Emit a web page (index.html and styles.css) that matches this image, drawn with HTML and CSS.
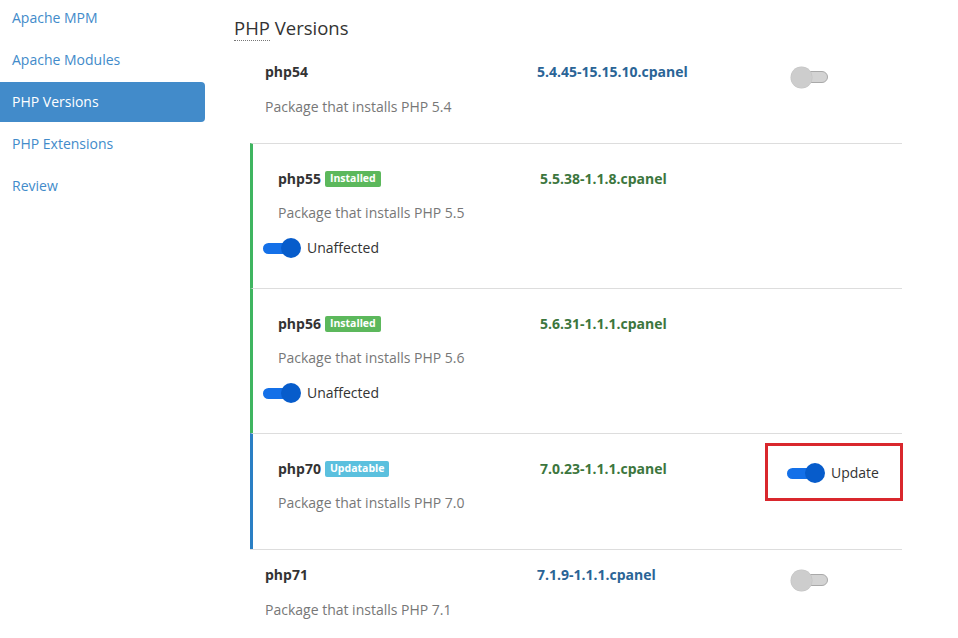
FILE: index.html
```html
<!DOCTYPE html>
<html>
<head>
<meta charset="utf-8">
<link rel="stylesheet" href="styles.css">
</head>
<body>
<div class="page">
  <nav class="sidebar">
    <a class="nav-item">Apache MPM</a>
    <a class="nav-item">Apache Modules</a>
    <a class="nav-item active">PHP Versions</a>
    <a class="nav-item">PHP Extensions</a>
    <a class="nav-item">Review</a>
  </nav>
  <main class="main">
    <h2 class="title"><abbr class="abbr" title="PHP: Hypertext Preprocessor">PHP</abbr> Versions</h2>
    <div class="list">
      <div class="pkg plain">
        <div class="name">php54</div>
        <div class="ver">5.4.45-15.15.10.cpanel</div>
        <div class="act"><span class="toggle off"><span class="track"></span><span class="knob"></span></span></div>
        <div class="desc">Package that installs PHP 5.4</div>
      </div>
      <div class="pkg marked installed">
        <div class="name">php55 <span class="badge green">Installed</span></div>
        <div class="ver">5.5.38-1.1.8.cpanel</div>
        <div class="desc">Package that installs PHP 5.5</div>
        <div class="state"><span class="toggle on"><span class="track"></span><span class="knob"></span></span><span class="state-label">Unaffected</span></div>
      </div>
      <div class="pkg marked installed">
        <div class="name">php56 <span class="badge green">Installed</span></div>
        <div class="ver">5.6.31-1.1.1.cpanel</div>
        <div class="desc">Package that installs PHP 5.6</div>
        <div class="state"><span class="toggle on"><span class="track"></span><span class="knob"></span></span><span class="state-label">Unaffected</span></div>
      </div>
      <div class="pkg marked updatable">
        <div class="name">php70 <span class="badge blue">Updatable</span></div>
        <div class="ver">7.0.23-1.1.1.cpanel</div>
        <div class="act highlight"><span class="toggle on"><span class="track"></span><span class="knob"></span></span><span class="state-label">Update</span></div>
        <div class="desc">Package that installs PHP 7.0</div>
      </div>
      <div class="pkg plain">
        <div class="name">php71</div>
        <div class="ver">7.1.9-1.1.1.cpanel</div>
        <div class="act"><span class="toggle off"><span class="track"></span><span class="knob"></span></span></div>
        <div class="desc">Package that installs PHP 7.1</div>
      </div>
    </div>
  </main>
</div>
</body>
</html>
```

FILE: styles.css
```css
html, body {
  margin: 0;
  padding: 0;
  background: #fff;
}
body {
  font-family: "Open Sans", "Liberation Sans", sans-serif;
  font-size: 14px;
  line-height: 20px;
  color: #333;
  overflow: hidden;
}
.page {
  display: flex;
  align-items: flex-start;
}
.sidebar {
  width: 205px;
  flex: none;
  display: flex;
  flex-direction: column;
  gap: 2px;
  margin-top: -2px;
}
.nav-item {
  display: block;
  padding: 10px 12px;
  color: #428bca;
  text-decoration: none;
  border-radius: 0 4px 4px 0;
}
.nav-item.active {
  background: #428bca;
  color: #fff;
}
.main {
  flex: none;
  padding-left: 29px;
}
.title {
  margin: 18px 0 0 0;
  font-size: 18.5px;
  line-height: 20px;
  font-weight: 400;
  color: #333;
}
.abbr {
  text-decoration: none;
  border-bottom: 1px dotted #777;
  cursor: help;
}
.list {
  margin-left: 16px;
  width: 652px;
  margin-top: 9px;
}
.pkg {
  display: grid;
  border-top: 1px solid #ddd;
}
.pkg:first-child {
  border-top: 0;
}
.pkg.plain {
  grid-template-columns: 272px 254px auto;
  padding: 15px 15px 26px 15px;
  row-gap: 15px;
}
.pkg.marked {
  grid-template-columns: 262px 225px auto;
  padding: 25px 0 30px 25px;
  row-gap: 14px;
  border-left: 3px solid #3fb560;
}
.pkg.marked.updatable {
  border-left-color: #2a7fc4;
  padding-bottom: 36px;
}
.name {
  grid-column: 1;
  grid-row: 1;
  font-weight: 700;
  color: #333;
  display: flex;
  align-items: center;
  gap: 4px;
}
.ver {
  grid-column: 2;
  grid-row: 1;
  font-weight: 700;
  color: #2a6496;
}
.marked .ver {
  color: #3c763d;
}
.act {
  grid-column: 3;
  grid-row: 1 / 3;
  align-self: start;
  margin-top: 5px;
}
.desc {
  grid-column: 1 / 3;
  grid-row: 2;
  color: #777;
}
.state {
  grid-column: 1 / 4;
  grid-row: 3;
  margin-left: -15px;
  margin-top: 1px;
  display: flex;
  align-items: center;
  gap: 6px;
  color: #333;
}
.state-label {
  color: #333;
}
.act.highlight {
  margin-top: -16px;
  width: 138px;
  height: 58px;
  box-sizing: border-box;
  border: 3px solid #d9272d;
  display: flex;
  align-items: center;
  padding-left: 19px;
  padding-top: 2px;
  gap: 6px;
}
.badge {
  display: inline-block;
  font-size: 10.5px;
  font-weight: 700;
  line-height: 1;
  color: #fff;
  padding: 2px 5px 3px;
  border-radius: 2px;
}
.badge.green { background: #5cb85c; }
.badge.blue { background: #5bc0de; }

.toggle {
  position: relative;
  display: inline-block;
  width: 38px;
  height: 21px;
  flex: none;
}
.toggle .track {
  position: absolute;
  top: 5px;
  height: 11px;
  border-radius: 6px;
}
.toggle .knob {
  position: absolute;
  top: 0;
  width: 21px;
  height: 21px;
  border-radius: 50%;
}
.toggle.on {
  height: 20px;
}
.toggle.on .track {
  left: 0;
  right: 10px;
  background: #1470e8;
}
.toggle.on .knob {
  right: 0;
  background: #075ccb;
  width: 20px;
  height: 20px;
}
.toggle.off {
  width: 37px;
}
.toggle.off .track {
  left: 9px;
  right: 0;
  top: 4px;
  height: 10px;
  background: #d3d3d3;
  border: 1px solid #a9a9a9;
}
.toggle.off .knob {
  left: 0;
  background: #cdcdcd;
  box-shadow: 0 0 0 0.5px #c4c4c4;
}
```
